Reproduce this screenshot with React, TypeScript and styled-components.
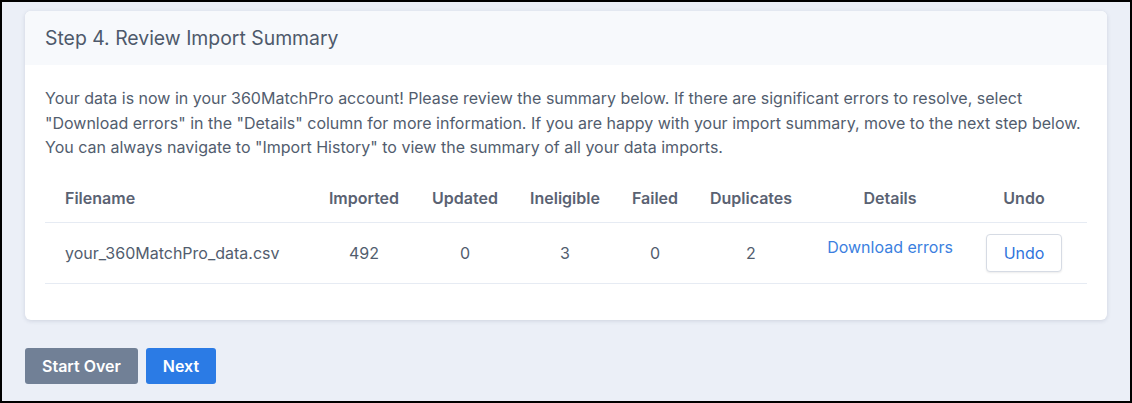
import styled, { createGlobalStyle } from "styled-components";

const GlobalStyle = createGlobalStyle`
  html, body {
    margin: 0;
    padding: 0;
  }
  body {
    font-family: Inter, "Noto Sans", "Liberation Sans", sans-serif;
  }
`;

const COLUMNS = [
  { label: "Filename", width: 265, align: "left" },
  { label: "Imported", width: 108, align: "center" },
  { label: "Updated", width: 94, align: "center" },
  { label: "Ineligible", width: 106, align: "center" },
  { label: "Failed", width: 74, align: "center" },
  { label: "Duplicates", width: 118, align: "center" },
  { label: "Details", width: 160, align: "center" },
  { label: "Undo", width: 117, align: "center" },
];

const App = () => {
  return (
    <>
      <GlobalStyle />
      <Page>
        <Card>
          <CardHeader>
            <Title>Step 4. Review Import Summary</Title>
          </CardHeader>
          <CardBody>
            <Intro>
              Your data is now in your 360MatchPro account! Please review the
              summary below. If there are significant errors to resolve, select
              "Download errors" in the "Details" column for more information. If
              you are happy with your import summary, move to the next step
              below. You can always navigate to "Import History" to view the
              summary of all your data imports.
            </Intro>
            <Table>
              <colgroup>
                {COLUMNS.map((c) => (
                  <col key={c.label} style={{ width: c.width }} />
                ))}
              </colgroup>
              <thead>
                <tr>
                  {COLUMNS.map((c) => (
                    <Th key={c.label} $left={c.align === "left"}>
                      {c.label}
                    </Th>
                  ))}
                </tr>
              </thead>
              <tbody>
                <tr>
                  <Td $left>your_360MatchPro_data.csv</Td>
                  <Td>492</Td>
                  <Td>0</Td>
                  <Td>3</Td>
                  <Td>0</Td>
                  <Td>2</Td>
                  <Td>
                    <DetailsLink href="#">Download errors</DetailsLink>
                  </Td>
                  <Td>
                    <UndoButton>Undo</UndoButton>
                  </Td>
                </tr>
              </tbody>
            </Table>
          </CardBody>
        </Card>
        <Actions>
          <ActionButton $variant="secondary">Start Over</ActionButton>
          <ActionButton $variant="primary">Next</ActionButton>
        </Actions>
      </Page>
    </>
  );
};

const Page = styled.div`
  box-sizing: border-box;
  height: 403px;
  border: 2px solid #000;
  background-color: #ebeff7;
  padding: 9px 23px 0;
`;
const Card = styled.div`
  background-color: #fff;
  border-radius: 6px;
  box-shadow: 0 1px 4px rgba(40, 55, 90, 0.15);
  overflow: hidden;
`;
const CardHeader = styled.div`
  background-color: #f7f9fc;
  height: 54px;
  display: flex;
  align-items: center;
  padding: 0 20px;
`;
const Title = styled.h2`
  margin: 0;
  font-size: 19.4px;
  font-weight: 400;
  color: #4e596b;
`;
const CardBody = styled.div`
  padding: 21px 20px 36px;
`;
const Intro = styled.p`
  margin: 0 0 14px;
  font-size: 16px;
  line-height: 24.5px;
  color: #525d6e;
`;
const Table = styled.table`
  width: 100%;
  table-layout: fixed;
  border-collapse: collapse;
  font-size: 16px;
  color: #525d6e;
`;
const Th = styled.th<{ $left?: boolean }>`
  text-align: ${(p) => (p.$left ? "left" : "center")};
  padding: ${(p) => (p.$left ? "0 0 0 20px" : "0")};
  height: 48px;
  font-weight: 600;
  color: #5a6272;
  border-bottom: 1px solid #e6ebf3;
  white-space: nowrap;
  &:last-child {
    padding-right: 9px;
  }
`;
const Td = styled.td<{ $left?: boolean }>`
  text-align: ${(p) => (p.$left ? "left" : "center")};
  padding: ${(p) => (p.$left ? "0 0 0 20px" : "0")};
  height: 60px;
  border-bottom: 1px solid #e6ebf3;
  white-space: nowrap;
  &:last-child {
    padding-right: 9px;
  }
`;
const DetailsLink = styled.a`
  color: #3b7fe0;
  text-decoration: none;
  position: relative;
  top: -6px;
`;
const UndoButton = styled.button`
  font-family: inherit;
  font-size: 16px;
  color: #2f74dc;
  background-color: #fff;
  border: 1px solid #d6dbe4;
  border-radius: 4px;
  box-shadow: 0 1px 2px rgba(0, 0, 0, 0.08);
  width: 76px;
  height: 38px;
  cursor: pointer;
`;
const Actions = styled.div`
  display: flex;
  gap: 8px;
  margin-top: 28px;
`;
const ActionButton = styled.button<{ $variant: "primary" | "secondary" }>`
  font-family: inherit;
  font-size: 16px;
  font-weight: 600;
  color: #fff;
  background-color: ${(p) => (p.$variant === "primary" ? "#2b7be5" : "#718096")};
  border: none;
  border-radius: 3px;
  height: 36px;
  padding: 0 17px;
  cursor: pointer;
`;

export default App;
